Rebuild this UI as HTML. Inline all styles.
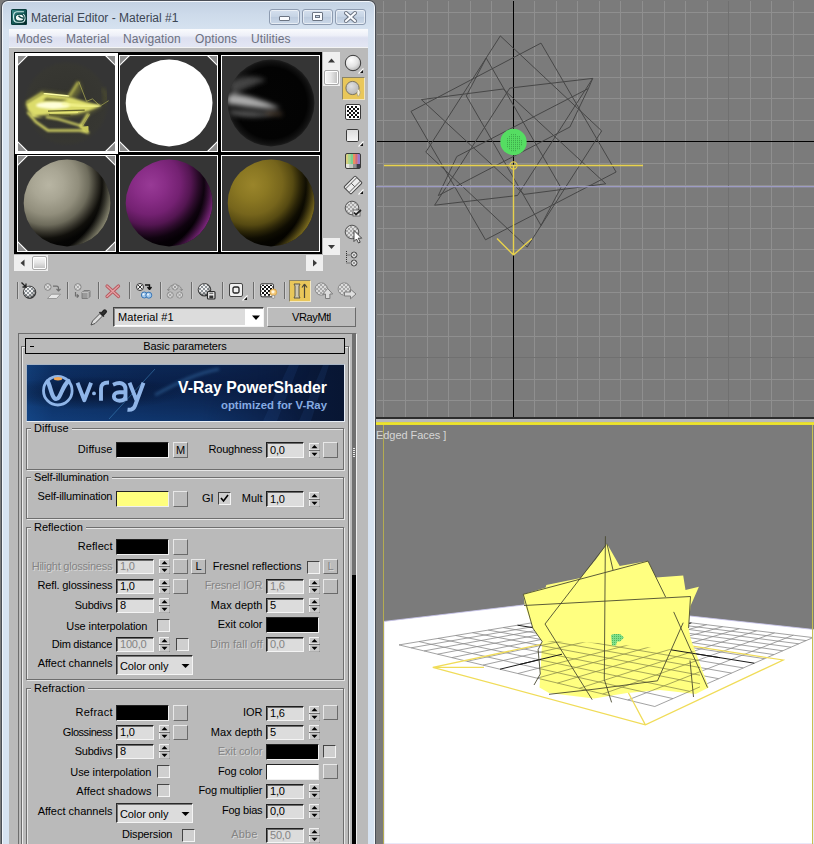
<!DOCTYPE html><html><head><meta charset="utf-8"><title>Material Editor</title><style>
*{box-sizing:border-box;margin:0;padding:0}
html,body{width:814px;height:844px;overflow:hidden;background:#7b7b7b}
body{position:relative;font-family:"Liberation Sans",sans-serif;font-size:11px;color:#000}
.a{position:absolute}
.t{position:absolute;white-space:nowrap;line-height:13px;height:13px;letter-spacing:-0.25px}
.r{text-align:right}
.dis{color:#848484;text-shadow:1px 1px 0 #d8d8d8}
.fld{position:absolute;height:15px;background:#dcdcdc;border:1px solid;border-color:#1e1e1e #f4f4f4 #f4f4f4 #1e1e1e;box-shadow:inset 1px 1px 0 #6a6a6a;font-size:11px;line-height:14px;padding-left:3px;letter-spacing:-0.2px;white-space:nowrap;overflow:hidden}
.fld.dis{color:#848484;text-shadow:1px 1px 0 #d8d8d8}
.sw{position:absolute;border:1px solid;border-color:#222 #f0f0f0 #f0f0f0 #222}
.mb{position:absolute;width:15px;height:15px;background:#bcbcbc;border:1px solid;border-color:#e8e8e8 #6a6a6a #6a6a6a #e8e8e8;font-size:11px;line-height:12px;text-align:center}
.cb{position:absolute;width:13px;height:13px;background:#cfcfcf;border:1px solid;border-color:#444 #f4f4f4 #f4f4f4 #444}
.grp{position:absolute;border:1px solid #6e6e6e;box-shadow:1px 1px 0 #e6e6e6, inset 1px 1px 0 #e6e6e6}
.gl{position:absolute;background:#bababa;padding:0 3px 0 3px;line-height:13px;height:13px;white-space:nowrap}
.sp{position:absolute;width:11px;height:15px}
.dd{position:absolute;height:20px;background:#dcdcdc;border:1px solid;border-color:#2a2a2a #f4f4f4 #f4f4f4 #2a2a2a;box-shadow:inset 1px 1px 0 #777;line-height:20px;padding-left:3px;white-space:nowrap}
</style></head><body><svg class="a" style="left:376px;top:0" width="438" height="419" viewBox="376 0 438 419" shape-rendering="crispEdges"><rect x="376" y="0" width="438" height="419" fill="#7b7b7b"/><path d="M383 0V417M376 12H814M405 0V417M376 34H814M427 0V417M376 55H814M448 0V417M376 77H814M470 0V417M376 98H814M491 0V417M376 120H814M534 0V417M376 163H814M556 0V417M376 185H814M577 0V417M376 206H814M599 0V417M376 228H814M620 0V417M376 249H814M642 0V417M376 271H814M664 0V417M376 292H814M685 0V417M376 314H814M707 0V417M376 336H814M750 0V417M376 379H814M771 0V417M376 400H814M793 0V417" stroke="#8f8f8f" stroke-width="1" fill="none" transform="translate(0.5,0.5)"/><path d="M728 0V417M376 357H814" stroke="#707070" stroke-width="1" fill="none" transform="translate(0.5,0.5)"/><path d="M513 0V417M376 141H814" stroke="#000" stroke-width="1" fill="none" transform="translate(0.5,0.5)"/></svg><svg class="a" style="left:376px;top:0" width="438" height="419" viewBox="376 0 438 419"><path d="M500.3 35.9L601.7 130.9L527.2 247.1L425.8 152.1ZM411.0 111.4L541.0 43.1L616.1 172.0L485.5 239.8ZM588.4 88.5L456.8 156.5L438.3 195.6L569.9 127.0ZM421.4 99.6L503.2 89.0L605.8 183.8L524.0 194.4ZM509.8 88.1L592.7 78.4L517.5 195.5L434.6 205.2ZM486.2 58.0L466.3 95.9L541.0 225.5L560.9 187.6ZM588.4 88.5L592.7 78.4" stroke="#474747" stroke-width="1" fill="none"/><rect x="376" y="186" width="438" height="1.3" fill="#9d9bc4"/><path d="M384 165.5H643M513.5 165V255M513.5 255L497 238.5M513.5 255L532 238.5" stroke="#e8d24c" stroke-width="1.4" fill="none"/><circle cx="513.5" cy="165.5" r="3.6" stroke="#e6cf4a" stroke-width="1.1" fill="none"/><circle cx="513.5" cy="142" r="13.2" fill="#55dd62"/><rect x="511" y="134" width="1" height="1.2" fill="#3fae4c"/><rect x="513" y="134" width="1" height="1.2" fill="#3fae4c"/><rect x="515" y="134" width="1" height="1.2" fill="#3fae4c"/><rect x="509" y="136" width="1" height="1.2" fill="#3fae4c"/><rect x="511" y="136" width="1" height="1.2" fill="#3fae4c"/><rect x="513" y="136" width="1" height="1.2" fill="#3fae4c"/><rect x="515" y="136" width="1" height="1.2" fill="#3fae4c"/><rect x="517" y="136" width="1" height="1.2" fill="#3fae4c"/><rect x="519" y="136" width="1" height="1.2" fill="#3fae4c"/><rect x="507" y="138" width="1" height="1.2" fill="#3fae4c"/><rect x="509" y="138" width="1" height="1.2" fill="#3fae4c"/><rect x="511" y="138" width="1" height="1.2" fill="#3fae4c"/><rect x="513" y="138" width="1" height="1.2" fill="#3fae4c"/><rect x="515" y="138" width="1" height="1.2" fill="#3fae4c"/><rect x="517" y="138" width="1" height="1.2" fill="#3fae4c"/><rect x="519" y="138" width="1" height="1.2" fill="#3fae4c"/><rect x="507" y="140" width="1" height="1.2" fill="#3fae4c"/><rect x="509" y="140" width="1" height="1.2" fill="#3fae4c"/><rect x="511" y="140" width="1" height="1.2" fill="#3fae4c"/><rect x="513" y="140" width="1" height="1.2" fill="#3fae4c"/><rect x="515" y="140" width="1" height="1.2" fill="#3fae4c"/><rect x="517" y="140" width="1" height="1.2" fill="#3fae4c"/><rect x="519" y="140" width="1" height="1.2" fill="#3fae4c"/><rect x="521" y="140" width="1" height="1.2" fill="#3fae4c"/><rect x="507" y="142" width="1" height="1.2" fill="#3fae4c"/><rect x="509" y="142" width="1" height="1.2" fill="#3fae4c"/><rect x="511" y="142" width="1" height="1.2" fill="#3fae4c"/><rect x="513" y="142" width="1" height="1.2" fill="#3fae4c"/><rect x="515" y="142" width="1" height="1.2" fill="#3fae4c"/><rect x="517" y="142" width="1" height="1.2" fill="#3fae4c"/><rect x="519" y="142" width="1" height="1.2" fill="#3fae4c"/><rect x="521" y="142" width="1" height="1.2" fill="#3fae4c"/><rect x="507" y="144" width="1" height="1.2" fill="#3fae4c"/><rect x="509" y="144" width="1" height="1.2" fill="#3fae4c"/><rect x="511" y="144" width="1" height="1.2" fill="#3fae4c"/><rect x="513" y="144" width="1" height="1.2" fill="#3fae4c"/><rect x="515" y="144" width="1" height="1.2" fill="#3fae4c"/><rect x="517" y="144" width="1" height="1.2" fill="#3fae4c"/><rect x="519" y="144" width="1" height="1.2" fill="#3fae4c"/><rect x="521" y="144" width="1" height="1.2" fill="#3fae4c"/><rect x="507" y="146" width="1" height="1.2" fill="#3fae4c"/><rect x="509" y="146" width="1" height="1.2" fill="#3fae4c"/><rect x="511" y="146" width="1" height="1.2" fill="#3fae4c"/><rect x="513" y="146" width="1" height="1.2" fill="#3fae4c"/><rect x="515" y="146" width="1" height="1.2" fill="#3fae4c"/><rect x="517" y="146" width="1" height="1.2" fill="#3fae4c"/><rect x="519" y="146" width="1" height="1.2" fill="#3fae4c"/><rect x="509" y="148" width="1" height="1.2" fill="#3fae4c"/><rect x="511" y="148" width="1" height="1.2" fill="#3fae4c"/><rect x="513" y="148" width="1" height="1.2" fill="#3fae4c"/><rect x="515" y="148" width="1" height="1.2" fill="#3fae4c"/><rect x="517" y="148" width="1" height="1.2" fill="#3fae4c"/><rect x="519" y="148" width="1" height="1.2" fill="#3fae4c"/><rect x="511" y="150" width="1" height="1.2" fill="#3fae4c"/><rect x="513" y="150" width="1" height="1.2" fill="#3fae4c"/><rect x="515" y="150" width="1" height="1.2" fill="#3fae4c"/></svg><div class="a" style="left:376px;top:417px;width:438px;height:2px;background:#2c2c2c"></div><div class="a" style="left:376px;top:419px;width:438px;height:3px;background:#b9b9b9"></div><div class="a" style="left:376px;top:422px;width:438px;height:3px;background:linear-gradient(#d8d040,#efe62c 40%,#e6dc30)"></div><svg class="a" style="left:376px;top:425px" width="438" height="419" viewBox="376 425 438 419"><rect x="376" y="425" width="438" height="419" fill="#7b7b7b"/><polygon points="384,621.4 555,601.3 814,629.5 814,844 384,844" fill="#ffffff" stroke="#c8c4ee" stroke-width="0.8"/><path d="M399.0 644.9L654.8 706.5M399.0 644.9L599.0 611.7M419.1 641.6L673.0 698.6M411.2 647.8L610.8 613.1M438.0 638.4L689.6 691.3M424.1 650.9L623.1 614.6M455.8 635.5L704.8 684.7M437.6 654.2L635.8 616.1M472.5 632.7L718.7 678.7M451.9 657.6L648.9 617.7M488.3 630.1L731.5 673.1M467.0 661.3L662.6 619.4M503.3 627.6L743.3 667.9M483.0 665.1L676.7 621.1M530.9 623.0L764.5 658.7M518.0 673.5L706.7 624.7M543.7 620.9L773.9 654.6M537.1 678.2L722.7 626.7M555.8 618.9L782.8 650.8M557.5 683.1L739.2 628.7M567.4 616.9L791.1 647.2M579.4 688.3L756.5 630.8M578.4 615.1L798.8 643.8M602.7 694.0L774.5 632.9M588.9 613.4L806.1 640.6M627.8 700.0L793.3 635.2M599.0 611.7L813.0 637.6M654.8 706.5L813.0 637.6" stroke="#8a8a8a" stroke-width="0.8" fill="none"/><path d="M517.5 625.2L754.3 663.2M500.0 669.2L691.4 622.9" stroke="#1a1a1a" stroke-width="1" fill="none"/><path d="M432.8 667.3L645.4 724.9L783.2 660L600 632ZM645.4 724.9L626.4 689M432.8 667.3L484 667.3" stroke="#f0dc58" stroke-width="1.25" fill="none"/><polygon points="523.3,594.3 545.7,587.6 546.3,584.9 580.6,578.1 596.0,559.2 607.0,543.8 619.7,566.0 648.0,561.1 656.0,577.5 683.2,575.4 685.5,590.0 698.9,586.8 690.5,606.0 688.6,628.0 690.6,638.5 708.7,687.5 695.8,694.0 660.0,690.0 627.0,693.0 594.0,698.4 549.0,693.0 539.5,687.6 540.3,674.0 542.2,641.6 532.8,628.1 524.6,603.8" fill="#ffff80"/><clipPath id="oc"><polygon points="523.3,594.3 545.7,587.6 546.3,584.9 580.6,578.1 596.0,559.2 607.0,543.8 619.7,566.0 648.0,561.1 656.0,577.5 683.2,575.4 685.5,590.0 698.9,586.8 690.5,606.0 688.6,628.0 690.6,638.5 708.7,687.5 695.8,694.0 660.0,690.0 627.0,693.0 594.0,698.4 549.0,693.0 539.5,687.6 540.3,674.0 542.2,641.6 532.8,628.1 524.6,603.8"/></clipPath><clipPath id="oc2"><polygon points="520,640 600,643 700,652 700,700 520,700"/></clipPath><g clip-path="url(#oc2)"><path d="M399.0 644.9L654.8 706.5M399.0 644.9L599.0 611.7M419.1 641.6L673.0 698.6M411.2 647.8L610.8 613.1M438.0 638.4L689.6 691.3M424.1 650.9L623.1 614.6M455.8 635.5L704.8 684.7M437.6 654.2L635.8 616.1M472.5 632.7L718.7 678.7M451.9 657.6L648.9 617.7M488.3 630.1L731.5 673.1M467.0 661.3L662.6 619.4M503.3 627.6L743.3 667.9M483.0 665.1L676.7 621.1M530.9 623.0L764.5 658.7M518.0 673.5L706.7 624.7M543.7 620.9L773.9 654.6M537.1 678.2L722.7 626.7M555.8 618.9L782.8 650.8M557.5 683.1L739.2 628.7M567.4 616.9L791.1 647.2M579.4 688.3L756.5 630.8M578.4 615.1L798.8 643.8M602.7 694.0L774.5 632.9M588.9 613.4L806.1 640.6M627.8 700.0L793.3 635.2M599.0 611.7L813.0 637.6M654.8 706.5L813.0 637.6" stroke="#90904c" stroke-width="0.8" fill="none" clip-path="url(#oc)"/></g><clipPath id="oc3"><polygon points="520,640 562,640 562,700 520,700"/><polygon points="671,640 720,640 720,700 671,700"/></clipPath><g clip-path="url(#oc3)"><path d="M517.5 625.2L754.3 663.2M500.0 669.2L691.4 622.9" stroke="#1a1a1a" stroke-width="1" fill="none"/></g><path d="M605.4 536.2L604.3 679.5L611.6 702.4M607 543.8L613 570M523.3 594.3L648 561.1L665.6 597M524 605.5L690.5 596.5L688.6 628M606 545L545 624L592.2 699.7M523.3 594.3L532.8 628.1L542.2 641.6L538.1 649.7L540.3 674L534 685M549 694.3L596 689L657.5 680.8L683.2 622.7M673.7 611.9L707.5 687.6M690 660.5L693.5 697" stroke="#4a4a30" stroke-width="0.9" fill="none"/><pattern id="gz" width="2" height="2" patternUnits="userSpaceOnUse"><rect width="2" height="2" fill="#7fe08a"/><rect width="1" height="1" fill="#4fb85c"/></pattern><path d="M611 635l3-1h6l4 3.500l-4 4h-3l-1 4h-4z" fill="url(#gz)"/><rect x="383" y="425" width="1" height="419" fill="#b4ac52"/><rect x="812" y="425" width="1" height="419" fill="#c8c050"/></svg><div class="t" style="left:376px;top:429px;color:#d6d6d6;font-size:11px;letter-spacing:-0.05px">Edged Faces ]</div><div class="a" style="left:0;top:0;width:376px;height:844px;background:#7b7b7b"></div><div class="a" style="left:1px;top:0;width:375px;height:850px;border-radius:7px 7px 0 0;background:#4a4f57"></div><div class="a" style="left:2px;top:1px;width:373px;height:850px;border-radius:6px 6px 0 0;background:#f2f6fb"></div><div class="a" style="left:3px;top:2px;width:371px;height:850px;border-radius:5px 5px 0 0;background:linear-gradient(#c3d2e3 0px,#cddaea 12px,#d6e2f0 28px,#d7e3f1 60px)"></div><div class="a" style="left:9px;top:29px;width:359px;height:815px;background:#bababa"></div><svg class="a" style="left:11px;top:9px" width="16" height="16" viewBox="0 0 16 16">
<defs><linearGradient id="ig" x1="0" y1="0" x2="1" y2="1"><stop offset="0" stop-color="#3c8f8c"/><stop offset=".5" stop-color="#145a58"/><stop offset="1" stop-color="#031c1c"/></linearGradient></defs>
<rect x="0" y="0" width="16" height="16" rx="1.500" fill="url(#ig)"/>
<rect x=".5" y=".5" width="15" height="15" rx="1.200" fill="none" stroke="#0a3c3c" stroke-width="1"/>
<path d="M12.500 2.800H6C3.500 2.800 2.500 4.500 2.500 8s1.200 5.300 3.800 5.300h4.500c2.200 0 3.200-1.600 3.200-4.200c0-1.500-.5-2.800-1.500-3.600" stroke="#d4eeec" stroke-width="1.100" fill="none" stroke-linecap="round"/>
<ellipse cx="8.700" cy="8.700" rx="4" ry="3.100" fill="#f0f8f6"/>
<path d="M7.500 6.800c1.500 1.800 3 2.500 5 2.500" stroke="#0c4644" stroke-width="1.400" fill="none"/>
<ellipse cx="8.700" cy="8.700" rx="4.300" ry="3.400" fill="none" stroke="#0c4442" stroke-width=".9"/>
</svg><div class="t" style="left:31px;top:10px;font-size:12px;line-height:16px;height:16px;letter-spacing:0;color:#3c4654">Material Editor - Material #1</div><div class="a" style="left:269px;top:9px;width:31px;height:16px;border:1px solid #8d9bb0;border-radius:3px;background:linear-gradient(#d5e0ee,#c5d3e4 50%,#bccbde 51%,#cbd8e8);box-shadow:inset 0 0 0 1px rgba(255,255,255,.55)"></div><div class="a" style="left:279px;top:16px;width:11px;height:5px;border:1px solid #6b7482;border-radius:1px;background:#fafcff"></div><div class="a" style="left:302px;top:9px;width:31px;height:16px;border:1px solid #8d9bb0;border-radius:3px;background:linear-gradient(#d5e0ee,#c5d3e4 50%,#bccbde 51%,#cbd8e8);box-shadow:inset 0 0 0 1px rgba(255,255,255,.55)"></div><div class="a" style="left:312px;top:12px;width:11px;height:9px;border:1px solid #6b7482;border-radius:1px;background:#fafcff"></div><div class="a" style="left:315px;top:15px;width:5px;height:3px;border:1px solid #6b7482;background:#c9d6e6"></div><div class="a" style="left:335px;top:9px;width:31px;height:16px;border:1px solid #8d9bb0;border-radius:3px;background:linear-gradient(#d5e0ee,#c5d3e4 50%,#bccbde 51%,#cbd8e8);box-shadow:inset 0 0 0 1px rgba(255,255,255,.55)"></div><svg class="a" style="left:344px;top:11px" width="13" height="12" viewBox="0 0 13 12"><path d="M2 2L11 10M11 2L2 10" stroke="#6b7482" stroke-width="4" stroke-linecap="square"/><path d="M2 2L11 10M11 2L2 10" stroke="#fafcff" stroke-width="2" stroke-linecap="square"/></svg><div class="a" style="left:9px;top:29px;width:359px;height:18px;background:linear-gradient(#fafbfd 0,#eef0f8 35%,#dde0f0 50%,#e3e6f3 100%)"></div><div class="a" style="left:9px;top:47px;width:359px;height:1px;background:#f4f4f4"></div><div class="t" style="left:16px;top:32px;font-size:12px;line-height:15px;height:15px;letter-spacing:0.1px;color:#6c7080">Modes</div><div class="t" style="left:66px;top:32px;font-size:12px;line-height:15px;height:15px;letter-spacing:0.1px;color:#6c7080">Material</div><div class="t" style="left:123px;top:32px;font-size:12px;line-height:15px;height:15px;letter-spacing:0.1px;color:#6c7080">Navigation</div><div class="t" style="left:195px;top:32px;font-size:12px;line-height:15px;height:15px;letter-spacing:0.1px;color:#6c7080">Options</div><div class="t" style="left:251px;top:32px;font-size:12px;line-height:15px;height:15px;letter-spacing:0.1px;color:#6c7080">Utilities</div><div class="a" style="left:14px;top:52px;width:308px;height:202px;background:#000"></div><div class="a" style="left:15px;top:53px;width:103px;height:101px;background:#fff"></div><div class="a" style="left:17px;top:55px;width:99px;height:97px;background:#fff"></div><svg class="a" style="left:18px;top:56px" width="97" height="95" viewBox="0 0 97 95"><rect width="97" height="95" fill="#353535"/><defs><radialGradient id="bg1" cx=".5" cy=".5" r=".5"><stop offset="0" stop-color="#33332e"/><stop offset=".9" stop-color="#373732"/><stop offset="1" stop-color="#353535"/></radialGradient>
<filter id="bl" x="-20%" y="-20%" width="140%" height="140%"><feGaussianBlur stdDeviation="0.9"/></filter>
<filter id="bl0" x="-20%" y="-20%" width="140%" height="140%"><feGaussianBlur stdDeviation="0.45"/></filter>
<filter id="bl2" x="-20%" y="-20%" width="140%" height="140%"><feGaussianBlur stdDeviation="2"/></filter></defs>
<circle cx="48.5" cy="47.5" r="43" fill="url(#bg1)"/>
<path d="M7 48L24 35L51 39L60.500 25L64 33L56 44L84 50L70 58L40 62L12 58Z" fill="#86863a" filter="url(#bl2)" opacity=".6"/>
<path d="M8 47.500L25 37.500L51 41L68 46L83 50L71 54.500L58 58L30 58.500L16 60L10 54Z" fill="#dcdc6a" filter="url(#bl)"/>
<path d="M28 41.500L50 43.500L43 46L25 45Z" fill="#6e6e34" filter="url(#bl)" opacity=".9"/>
<ellipse cx="35" cy="49.300" rx="17" ry="3.600" fill="#ffffd8" filter="url(#bl)"/>
<path d="M44 48L70 50.500L82 50" stroke="#fafa96" stroke-width="1.800" fill="none" filter="url(#bl)"/>
<path d="M25.600 37.500L51.300 40" stroke="#ffffa6" stroke-width="1.600" fill="none" filter="url(#bl0)"/>
<path d="M8.500 46.500L25 36.500" stroke="#b4b450" stroke-width="2.400" fill="none" filter="url(#bl)"/>
<path d="M51.300 40.500L60.500 26" stroke="#a4a44a" stroke-width="3.200" fill="none" filter="url(#bl)"/>
<path d="M30 55.200L66.700 54.200M31 58.800L52.400 59.400" stroke="#4c4c24" stroke-width="1.300" fill="none" opacity=".85" filter="url(#bl0)"/>
<path d="M32 57L60 56.500" stroke="#e8e878" stroke-width="1.100" fill="none" filter="url(#bl0)"/>
<path d="M9.500 56L18 66L30 74.500L62 74.500L70 76.500L62.500 70L70.500 57.500" stroke="#d4d462" stroke-width="2.600" fill="none" filter="url(#bl)" stroke-linejoin="round"/>
<path d="M28 61L40 63L64.400 70.300" stroke="#dcdc68" stroke-width="2.200" fill="none" filter="url(#bl)"/>
<path d="M11 50C13 56 17 60 26 62L14 61Z" fill="#dada6c" filter="url(#bl)"/>
<path d="M62 71L70 76V70Z" fill="#c8c85c" filter="url(#bl0)"/>
<path d="M60.800 25.600L68.500 45.300L74.500 42.900L82.200 50L90.600 44.700M64.400 70.300L71.500 58.400M70.300 70.300V76" stroke="#c0c058" stroke-width=".7" fill="none" opacity=".9"/>
<path d="M84 33C89 37 89 43 86 47" stroke="#58582f" stroke-width="3" fill="none" filter="url(#bl2)" opacity=".8"/>
<polygon points="0,0 9,0 0,9" fill="#8a8a8a"/><path d="M10 -1L-1 10" stroke="#fff" stroke-width="1.2"/><polygon points="97,0 88,0 97,9" fill="#8a8a8a"/><path d="M87 -1L98 10" stroke="#fff" stroke-width="1.2"/><polygon points="0,95 9,95 0,86" fill="#8a8a8a"/><path d="M10 96L-1 85" stroke="#fff" stroke-width="1.2"/><polygon points="97,95 88,95 97,86" fill="#8a8a8a"/><path d="M87 96L98 85" stroke="#fff" stroke-width="1.2"/></svg><div class="a" style="left:119px;top:55px;width:99px;height:97px;background:#fff"></div><svg class="a" style="left:120px;top:56px" width="97" height="95" viewBox="0 0 97 95"><rect width="97" height="95" fill="#353535"/><circle cx="49.100" cy="47" r="43.400" fill="#fff"/><polygon points="0,0 9,0 0,9" fill="#8a8a8a"/><path d="M10 -1L-1 10" stroke="#fff" stroke-width="1.2"/><polygon points="97,0 88,0 97,9" fill="#8a8a8a"/><path d="M87 -1L98 10" stroke="#fff" stroke-width="1.2"/><polygon points="0,95 9,95 0,86" fill="#8a8a8a"/><path d="M10 96L-1 85" stroke="#fff" stroke-width="1.2"/><polygon points="97,95 88,95 97,86" fill="#8a8a8a"/><path d="M87 96L98 85" stroke="#fff" stroke-width="1.2"/></svg><div class="a" style="left:221px;top:55px;width:99px;height:97px;background:#fff"></div><svg class="a" style="left:222px;top:56px" width="97" height="95" viewBox="0 0 97 95"><rect width="97" height="95" fill="#353535"/><defs><radialGradient id="s3" cx=".5" cy=".5" r=".5"><stop offset="0" stop-color="#040404"/><stop offset=".82" stop-color="#030303"/><stop offset=".95" stop-color="#121212"/><stop offset="1" stop-color="#1e1e1e"/></radialGradient>
<filter id="b3" x="-30%" y="-30%" width="160%" height="160%"><feGaussianBlur stdDeviation="2.4"/></filter><clipPath id="c3"><circle cx="49.100" cy="47" r="43.400"/></clipPath></defs>
<circle cx="49.100" cy="47" r="43.400" fill="url(#s3)"/>
<g clip-path="url(#c3)" filter="url(#b3)"><path d="M8 28C16 20 30 18 44 24C36 28 22 32 10 40Z" fill="#5a5a5a" opacity=".75"/><path d="M5 40C14 36 28 40 44 46L58 52C44 54 22 50 6 48Z" fill="#b4b4b4" opacity=".95"/><path d="M8 54C20 54 36 56 56 58C40 62 20 62 9 58Z" fill="#707070" opacity=".8"/><path d="M44 57L60 58" stroke="#a08060" stroke-width="3" opacity=".5"/></g></svg><div class="a" style="left:17px;top:155px;width:99px;height:97px;background:#fff"></div><svg class="a" style="left:18px;top:156px" width="97" height="95" viewBox="0 0 97 95"><rect width="97" height="95" fill="#353535"/><defs><radialGradient id="s4" gradientUnits="userSpaceOnUse" cx="27" cy="25" r="78" fx="31" fy="29"><stop offset="0" stop-color="#b8b5a3"/><stop offset=".2" stop-color="#a9a694"/><stop offset=".40" stop-color="#918e7c"/><stop offset=".54" stop-color="#6e6c5c"/><stop offset=".64" stop-color="#38362d"/><stop offset=".72" stop-color="#100f0b"/><stop offset=".80" stop-color="#050504"/><stop offset="1" stop-color="#030302"/></radialGradient><radialGradient id="s4r" gradientUnits="userSpaceOnUse" cx="14" cy="30" r="82.400"><stop offset="0.85" stop-color="#9a9880" stop-opacity="0"/><stop offset="0.94" stop-color="#9a9880" stop-opacity="0.55"/><stop offset="1" stop-color="#9a9880" stop-opacity="0.9"/></radialGradient></defs><circle cx="49.100" cy="47" r="43.400" fill="url(#s4)"/><circle cx="49.100" cy="47" r="43.400" fill="url(#s4r)"/><polygon points="0,0 9,0 0,9" fill="#8a8a8a"/><path d="M10 -1L-1 10" stroke="#fff" stroke-width="1.2"/><polygon points="97,0 88,0 97,9" fill="#8a8a8a"/><path d="M87 -1L98 10" stroke="#fff" stroke-width="1.2"/><polygon points="0,95 9,95 0,86" fill="#8a8a8a"/><path d="M10 96L-1 85" stroke="#fff" stroke-width="1.2"/><polygon points="97,95 88,95 97,86" fill="#8a8a8a"/><path d="M87 96L98 85" stroke="#fff" stroke-width="1.2"/></svg><div class="a" style="left:119px;top:155px;width:99px;height:97px;background:#fff"></div><svg class="a" style="left:120px;top:156px" width="97" height="95" viewBox="0 0 97 95"><rect width="97" height="95" fill="#353535"/><defs><radialGradient id="s5" gradientUnits="userSpaceOnUse" cx="27" cy="25" r="78" fx="31" fy="29"><stop offset="0" stop-color="#983a96"/><stop offset=".2" stop-color="#892d87"/><stop offset=".40" stop-color="#742172"/><stop offset=".54" stop-color="#541652"/><stop offset=".64" stop-color="#2b0b2a"/><stop offset=".72" stop-color="#0f030f"/><stop offset=".80" stop-color="#050005"/><stop offset="1" stop-color="#030003"/></radialGradient><radialGradient id="s5r" gradientUnits="userSpaceOnUse" cx="14" cy="30" r="82.400"><stop offset="0.85" stop-color="#8e2c8e" stop-opacity="0"/><stop offset="0.94" stop-color="#8e2c8e" stop-opacity="0.55"/><stop offset="1" stop-color="#8e2c8e" stop-opacity="0.9"/></radialGradient></defs><circle cx="49.100" cy="47" r="43.400" fill="url(#s5)"/><circle cx="49.100" cy="47" r="43.400" fill="url(#s5r)"/></svg><div class="a" style="left:221px;top:155px;width:99px;height:97px;background:#fff"></div><svg class="a" style="left:222px;top:156px" width="97" height="95" viewBox="0 0 97 95"><rect width="97" height="95" fill="#353535"/><defs><radialGradient id="s6" gradientUnits="userSpaceOnUse" cx="27" cy="25" r="78" fx="31" fy="29"><stop offset="0" stop-color="#9a852b"/><stop offset=".2" stop-color="#8b7823"/><stop offset=".40" stop-color="#76651c"/><stop offset=".54" stop-color="#564a12"/><stop offset=".64" stop-color="#2b2508"/><stop offset=".72" stop-color="#0f0d02"/><stop offset=".80" stop-color="#050400"/><stop offset="1" stop-color="#030200"/></radialGradient><radialGradient id="s6r" gradientUnits="userSpaceOnUse" cx="14" cy="30" r="82.400"><stop offset="0.85" stop-color="#8e7c24" stop-opacity="0"/><stop offset="0.94" stop-color="#8e7c24" stop-opacity="0.55"/><stop offset="1" stop-color="#8e7c24" stop-opacity="0.9"/></radialGradient></defs><circle cx="49.100" cy="47" r="43.400" fill="url(#s6)"/><circle cx="49.100" cy="47" r="43.400" fill="url(#s6r)"/></svg><div class="a" style="left:323px;top:52px;width:17px;height:34px;background:#efefef"></div><div class="a" style="left:324px;top:70px;width:15px;height:15px;border:1px solid #a8a8a8;border-radius:2px;box-shadow:inset 0 0 0 1px #fff;background:linear-gradient(90deg,#f8f8f8,#e6e6e6 45%,#bebebe)"></div><svg class="a" style="left:323px;top:52px" width="17" height="17"><polygon points="5,10.500 8.500,6.500 12,10.500" fill="#3a3a3a"/></svg><div class="a" style="left:323px;top:238px;width:17px;height:17px;background:#efefef"></div><svg class="a" style="left:323px;top:238px" width="17" height="17"><polygon points="5,7 12,7 8.500,11" fill="#3a3a3a"/></svg><div class="a" style="left:14px;top:255px;width:34px;height:16px;background:#efefef"></div><div class="a" style="left:32px;top:256px;width:15px;height:14px;border:1px solid #a8a8a8;border-radius:2px;box-shadow:inset 0 0 0 1px #fff;background:linear-gradient(#f8f8f8,#e6e6e6 45%,#bebebe)"></div><svg class="a" style="left:14px;top:255px" width="17" height="16"><polygon points="10.500,4.500 6.500,8 10.500,11.500" fill="#3a3a3a"/></svg><div class="a" style="left:306px;top:255px;width:17px;height:16px;background:#efefef"></div><svg class="a" style="left:306px;top:255px" width="17" height="16"><polygon points="7,4.500 11,8 7,11.500" fill="#3a3a3a"/></svg><svg class="a" style="left:0px;top:0px" width="1" height="1" viewBox="0 0 1 1"><defs><radialGradient id="sg" cx=".38" cy=".32" r=".7"><stop offset="0" stop-color="#ffffff"/><stop offset=".6" stop-color="#e4e4e4"/><stop offset="1" stop-color="#b8b8b8"/></radialGradient><radialGradient id="sg2" cx=".4" cy=".35" r=".7"><stop offset="0" stop-color="#e0e0e0"/><stop offset="1" stop-color="#b4b4b4"/></radialGradient><pattern id="chk" width="4" height="4" patternUnits="userSpaceOnUse"><rect width="4" height="4" fill="#fff"/><rect width="2" height="2" fill="#111"/><rect x="2" y="2" width="2" height="2" fill="#111"/></pattern><pattern id="chk2" width="4" height="4" patternUnits="userSpaceOnUse"><rect width="4" height="4" fill="#f0f0f0"/><rect width="2" height="2" fill="#8e9499"/><rect x="2" y="2" width="2" height="2" fill="#8e9499"/></pattern><pattern id="chk3" width="4" height="4" patternUnits="userSpaceOnUse"><rect width="4" height="4" fill="#dcdcdc"/><rect width="2" height="2" fill="#a8a8a8"/><rect x="2" y="2" width="2" height="2" fill="#a8a8a8"/></pattern></defs></svg><svg class="a" style="left:343px;top:52px" width="24" height="24" viewBox="0 0 24 24"><circle cx="10" cy="11" r="7.700" fill="url(#sg)" stroke="#3a3a3a" stroke-width="1"/><polygon points="20.0,21.0 16.5,21.0 20.0,17.5" fill="#111"/><path d="M15.5 21.5L20.5 16.5" stroke="#fff" stroke-width="1.1"/></svg><div class="a" style="left:342px;top:77px;width:23px;height:23px;background:#e9c75a;border:1px solid;border-color:#8a8468 #efe4c0 #efe4c0 #8a8468"></div><svg class="a" style="left:343px;top:77px" width="22" height="23" viewBox="0 0 22 23"><circle cx="9.500" cy="11" r="6.600" fill="url(#sg2)" stroke="#7a7460" stroke-width="1"/><path d="M15 12c2 1 2.500 3 1.800 5l-.8 2h-1.500l-.3-2.500" fill="#f6f2e0" stroke="#b0a680" stroke-width=".8"/></svg><svg class="a" style="left:345px;top:104px" width="17" height="17" viewBox="0 0 17 17"><rect x=".5" y=".5" width="15" height="15" rx="1.500" fill="#fff" stroke="#3a3a3a"/><rect x="2" y="2" width="12" height="12" fill="url(#chk)"/></svg><svg class="a" style="left:345px;top:128px" width="22" height="20" viewBox="0 0 22 20"><defs><linearGradient id="uv" x1="0" y1="0" x2="0" y2="1"><stop offset="0" stop-color="#dcdcdc"/><stop offset="1" stop-color="#f6f6f6"/></linearGradient></defs><rect x="1.500" y="1.500" width="12" height="12" rx="1.200" fill="url(#uv)" stroke="#3a3a3a"/><polygon points="18.0,18.0 14.5,18.0 18.0,14.5" fill="#111"/><path d="M13.5 18.5L18.5 13.5" stroke="#fff" stroke-width="1.1"/></svg><svg class="a" style="left:345px;top:153px" width="17" height="17" viewBox="0 0 17 17"><rect x="1.0" y="1" width="2.400" height="10" fill="#d8d080"/><rect x="3.3" y="1" width="2.400" height="10" fill="#a8d888"/><rect x="5.7" y="1" width="2.400" height="10" fill="#78d090"/><rect x="8.0" y="1" width="2.400" height="10" fill="#e89060"/><rect x="10.3" y="1" width="2.400" height="10" fill="#d86878"/><rect x="12.7" y="1" width="2.400" height="10" fill="#9878d0"/><rect x="1.0" y="11" width="3.500" height="4" fill="#e8e8e0"/><rect x="4.5" y="11" width="3.500" height="4" fill="#c0c8c0"/><rect x="8.0" y="11" width="3.500" height="4" fill="#909090"/><rect x="11.5" y="11" width="3.500" height="4" fill="#3a3c48"/><rect x=".5" y=".5" width="15" height="15" rx="1.500" fill="none" stroke="#3a3a3a"/></svg><svg class="a" style="left:343px;top:175px" width="24" height="24" viewBox="0 0 24 24"><g transform="rotate(-45 10 10)"><rect x="2" y="5" width="16" height="10" rx="1" fill="#ececec" stroke="#444" stroke-width="1"/><path d="M2 7.500H18M2 12.500H18M10 7.500V12.500" stroke="#555" stroke-width=".9"/></g><polygon points="20.0,19.0 16.5,19.0 20.0,15.5" fill="#111"/><path d="M15.5 19.5L20.5 14.5" stroke="#fff" stroke-width="1.1"/></svg><svg class="a" style="left:344px;top:200px" width="22" height="20" viewBox="0 0 22 20"><circle cx="8" cy="8" r="6.800" fill="url(#chk3)" stroke="#555" stroke-width="1"/><rect x="9" y="10" width="7" height="6" fill="#e8e8e8" stroke="#555" stroke-width=".8"/><path d="M10 12.500l2 2l5-4.500" stroke="#222" stroke-width="1.700" fill="none"/></svg><svg class="a" style="left:344px;top:224px" width="22" height="22" viewBox="0 0 22 22"><circle cx="8" cy="8" r="6.800" fill="url(#chk3)" stroke="#555" stroke-width="1"/><path d="M10 6.500v11l2.500-2.500l2 4l1.700-.8l-2-4h3.500z" fill="#fff" stroke="#333" stroke-width=".9"/></svg><svg class="a" style="left:344px;top:250px" width="22" height="20" viewBox="0 0 22 20"><path d="M2.500 1v12M2.500 5h3M2.500 13h3" stroke="#333" stroke-width="1" stroke-dasharray="1 1"/><circle cx="10" cy="5" r="3" fill="#e0e0e0" stroke="#444" stroke-width=".9"/><circle cx="10" cy="13" r="3" fill="#e0e0e0" stroke="#444" stroke-width=".9"/><path d="M8 3l4 4M12 3l-4 4M8 11l4 4M12 11l-4 4" stroke="#666" stroke-width=".6"/></svg><div class="a" style="left:17px;top:282px;width:1px;height:17px;background:#6c6c6c"></div><div class="a" style="left:18px;top:282px;width:1px;height:17px;background:#cdcdcd"></div><div class="a" style="left:67px;top:282px;width:1px;height:17px;background:#6c6c6c"></div><div class="a" style="left:68px;top:282px;width:1px;height:17px;background:#cdcdcd"></div><div class="a" style="left:98px;top:282px;width:1px;height:17px;background:#6c6c6c"></div><div class="a" style="left:99px;top:282px;width:1px;height:17px;background:#cdcdcd"></div><div class="a" style="left:129px;top:282px;width:1px;height:17px;background:#6c6c6c"></div><div class="a" style="left:130px;top:282px;width:1px;height:17px;background:#cdcdcd"></div><div class="a" style="left:160px;top:282px;width:1px;height:17px;background:#6c6c6c"></div><div class="a" style="left:161px;top:282px;width:1px;height:17px;background:#cdcdcd"></div><div class="a" style="left:191px;top:282px;width:1px;height:17px;background:#6c6c6c"></div><div class="a" style="left:192px;top:282px;width:1px;height:17px;background:#cdcdcd"></div><div class="a" style="left:222px;top:282px;width:1px;height:17px;background:#6c6c6c"></div><div class="a" style="left:223px;top:282px;width:1px;height:17px;background:#cdcdcd"></div><div class="a" style="left:253px;top:282px;width:1px;height:17px;background:#6c6c6c"></div><div class="a" style="left:254px;top:282px;width:1px;height:17px;background:#cdcdcd"></div><div class="a" style="left:284px;top:282px;width:1px;height:17px;background:#6c6c6c"></div><div class="a" style="left:285px;top:282px;width:1px;height:17px;background:#cdcdcd"></div><svg class="a" style="left:19px;top:280px" width="24" height="22" viewBox="0 0 24 22"><defs><radialGradient id="bsh" cx=".4" cy=".35" r=".65"><stop offset=".5" stop-color="#000" stop-opacity="0"/><stop offset="1" stop-color="#000" stop-opacity=".55"/></radialGradient></defs><circle cx="10.6" cy="12.3" r="6.2" fill="url(#chk2)" stroke="#3c3c3c" stroke-width=".9"/><circle cx="10.600" cy="12.300" r="6.200" fill="url(#bsh)"/><path d="M2.500 2.500l4.500 4.500M7 3.500V7H3.500" stroke="#222" stroke-width="1.300" fill="none"/></svg><svg class="a" style="left:43px;top:280px" width="24" height="22" viewBox="0 0 24 22"><circle cx="4.8" cy="7.0" r="3.3" fill="#e2e2e2" stroke="#7c7c7c" stroke-width=".9"/><path d="M3 5.200l3.600 3.600M6.600 5.200l-3.600 3.600" stroke="#8a8a8a" stroke-width=".8"/><path d="M10 6.200h3.500c1.500 0 2 .8 2 2v2M15.500 11l-2-2.200M15.500 11l2-2.200" stroke="#6e6e6e" stroke-width="1.200" fill="none"/><polygon points="4.500,18.500 8.500,14.200 17.500,14.200 13.500,18.500" fill="#e6e6e6" stroke="#8a8a8a" stroke-width=".8"/></svg><svg class="a" style="left:71px;top:280px" width="26" height="22" viewBox="0 0 26 22"><circle cx="6.8" cy="7.0" r="3.3" fill="#e2e2e2" stroke="#7c7c7c" stroke-width=".9"/><path d="M5 5.200l3.600 3.600M8.600 5.200l-3.600 3.600" stroke="#8a8a8a" stroke-width=".8"/><path d="M4.500 12v4h3M7.800 16l-2-1.600M7.800 16l-2 1.600" stroke="#6e6e6e" stroke-width="1.200" fill="none"/><path d="M11 12.500l2-2h6v6l-2 2h-6z" fill="#9a9a9a" stroke="#777" stroke-width=".9"/><path d="M11 12.500h6v6M17 12.500l2-2" fill="none" stroke="#c8c8c8" stroke-width=".8"/></svg><svg class="a" style="left:103px;top:282px" width="22" height="20" viewBox="0 0 22 20"><path d="M4 4L15.500 14.500M15.500 4L4 14.500" stroke="#b4585e" stroke-width="3.200" stroke-linecap="round"/><path d="M4 4L15.500 14.500M15.500 4L4 14.500" stroke="#e6a0a4" stroke-width="1.400" stroke-linecap="round"/></svg><svg class="a" style="left:133px;top:280px" width="26" height="22" viewBox="0 0 26 22"><circle cx="7.0" cy="7.0" r="3.5" fill="#f4f4f4" stroke="#222" stroke-width=".9"/><path d="M5 5l4 4M9 5l-4 4" stroke="#222" stroke-width=".9"/><path d="M12 5h4.500v3.500M16.500 9.500l-2-2.500M16.500 9.500l2-2.500" stroke="#111" stroke-width="1.400" fill="none"/><circle cx="11.3" cy="15.0" r="3.0" fill="#a4c8ea" stroke="#2e6eb2" stroke-width=".9"/><circle cx="15.8" cy="15.2" r="3.0" fill="#a4c8ea" stroke="#2e6eb2" stroke-width=".9"/><circle cx="10.500" cy="14.200" r="1" fill="#eef6ff"/><circle cx="15" cy="14.400" r="1" fill="#eef6ff"/></svg><svg class="a" style="left:164px;top:280px" width="26" height="22" viewBox="0 0 26 22"><circle cx="11.0" cy="7.0" r="3.1" fill="#d6d6d6" stroke="#8a8a8a" stroke-width=".9"/><circle cx="6.2" cy="15.0" r="3.1" fill="#d6d6d6" stroke="#8a8a8a" stroke-width=".9"/><circle cx="15.6" cy="15.0" r="3.1" fill="#d6d6d6" stroke="#8a8a8a" stroke-width=".9"/><path d="M9.200 5.200l3.600 3.600M12.800 5.200l-3.600 3.600M4.400 13.200l3.600 3.600M8 13.200l-3.600 3.600M13.800 13.200l3.600 3.600M17.400 13.200l-3.600 3.600" stroke="#8e8e8e" stroke-width=".8"/><path d="M4.500 10.500c0-3 1.500-4.500 3.500-5M17.500 10.500c0-3-1.500-4.500-3.500-5M4.500 10.800l-1.200-1.800M4.500 10.800l1.500-1.500M17.500 10.800l1.200-1.800M17.500 10.800l-1.500-1.500" stroke="#8a8a8a" stroke-width="1" fill="none"/></svg><svg class="a" style="left:195px;top:280px" width="26" height="22" viewBox="0 0 26 22"><circle cx="9.5" cy="9.8" r="6.3" fill="url(#chk2)" stroke="#3c3c3c" stroke-width=".9"/><circle cx="9.500" cy="9.800" r="6.300" fill="url(#bsh)"/><rect x="12.500" y="11.500" width="7.500" height="7.500" rx="1" fill="#f2f2f2" stroke="#2a2a2a" stroke-width="1.200"/><rect x="14.300" y="15.500" width="4" height="3" fill="#333"/><rect x="14.300" y="12.500" width="4" height="1.600" fill="#777"/></svg><svg class="a" style="left:226px;top:280px" width="26" height="22" viewBox="0 0 26 22"><rect x="3.500" y="3.500" width="13" height="13" rx="1.500" fill="#f0f0f0" stroke="#444" stroke-width="1"/><rect x="7" y="7" width="6" height="6" rx="1.500" fill="none" stroke="#222" stroke-width="1.300"/><polygon points="21.0,20.0 17.5,20.0 21.0,16.5" fill="#111"/><path d="M16.5 20.5L21.5 15.5" stroke="#fff" stroke-width="1.1"/></svg><svg class="a" style="left:258px;top:280px" width="26" height="22" viewBox="0 0 26 22"><rect x="2.500" y="3.800" width="13" height="13" rx="1.500" fill="#fff" stroke="#2e2e2e"/><rect x="3.500" y="4.800" width="11" height="11" fill="url(#chk)"/><circle cx="15.300" cy="12.300" r="3.400" fill="#f4c878" stroke="#d09838" stroke-width=".7"/><circle cx="15" cy="11.800" r="1.600" fill="#fff8e0"/><rect x="14" y="15.300" width="2.600" height="3" rx=".6" fill="#e8e8e8" stroke="#777" stroke-width=".6"/></svg><div class="a" style="left:289px;top:280px;width:22px;height:22px;background:#e9c75a;border:1px solid;border-color:#8a8468 #f3e8c4 #f3e8c4 #8a8468"></div><svg class="a" style="left:289px;top:280px" width="22" height="22" viewBox="0 0 22 22"><path d="M5 4h6l-1 2v10l1 2H5l1-2V6z" fill="#cfc8b0" stroke="#5a5648" stroke-width="1"/><path d="M15.500 18V5M15.500 4l-2.500 3.500M15.500 4l2.500 3.500" stroke="#4a4638" stroke-width="1.200" fill="none"/></svg><svg class="a" style="left:312px;top:280px" width="24" height="22" viewBox="0 0 24 22"><circle cx="9.3" cy="9.0" r="6.2" fill="url(#chk3)" stroke="#888" stroke-width=".9"/><path d="M13.500 18.500v-4.500h-2.800l5-5.500l5 5.500h-2.800v4.500z" fill="#dedede" stroke="#7c7c7c" stroke-width="1"/></svg><svg class="a" style="left:335px;top:280px" width="24" height="22" viewBox="0 0 24 22"><circle cx="9.3" cy="9.0" r="6.2" fill="url(#chk3)" stroke="#888" stroke-width=".9"/><path d="M9.500 12h6v-2.800l5.500 4.800l-5.500 4.800V16h-6z" fill="#dedede" stroke="#7c7c7c" stroke-width="1"/></svg><svg class="a" style="left:87px;top:305px" width="24" height="24" viewBox="0 0 24 24"><path d="M4 20l1.500-4L13 8.500l2.500 2.500L8 18.500z" fill="#dedede" stroke="#444" stroke-width=".9"/><path d="M12.500 7l4.500 4.500M14 8.500l3-3.200c1-1 3 1 2 2L16 10.500" stroke="#222" stroke-width="1.600" fill="#333"/></svg><div class="a" style="left:113px;top:307px;width:151px;height:20px;background:#fff;border:1px solid;border-color:#444 #f4f4f4 #f4f4f4 #444;box-shadow:inset 1px 1px 0 #8a8a8a"></div><div class="a" style="left:115px;top:309px;width:130px;height:16px;background:#dcdcdc"></div><div class="t" style="left:118px;top:311px;letter-spacing:0.12px">Material #1</div><svg class="a" style="left:251px;top:314px" width="10" height="7"><polygon points="1,1.500 9,1.500 5,6" fill="#000"/></svg><div class="a" style="left:267px;top:307px;width:89px;height:20px;background:#bcbcbc;border:1px solid;border-color:#ececec #6a6a6a #6a6a6a #ececec"></div><div class="t" style="left:267px;top:311px;width:89px;text-align:center;letter-spacing:-0.4px">VRayMtl</div><div class="a" style="left:18px;top:333px;width:339px;height:520px;border:1px solid;border-color:#6e6e6e #f0f0f0 #6e6e6e #6e6e6e"></div><div class="a" style="left:352px;top:334px;width:4px;height:241px;background:#707070"></div><div class="a" style="left:352px;top:575px;width:4px;height:270px;background:#000"></div><div class="a" style="left:353px;top:448px;width:2px;height:9px;background:repeating-linear-gradient(#e8e8e8 0 1px,#707070 1px 2px)"></div><div class="a" style="left:21px;top:346px;width:328px;height:510px;border:1px solid #6e6e6e;box-shadow:1px 1px 0 #ededed, inset 1px 1px 0 #ededed"></div><div class="a" style="left:25px;top:338px;width:320px;height:16px;background:#bababa;border:1px solid #000"></div><div class="a" style="left:30px;top:346px;width:4px;height:1px;background:#000"></div><div class="t" style="left:25px;top:340px;width:320px;text-align:center;letter-spacing:-0.14px">Basic parameters</div><svg class="a" style="left:27px;top:365px" width="317" height="56" viewBox="0 0 317 56">
<defs><linearGradient id="bn" x1="0" y1="0" x2="1" y2="0"><stop offset="0" stop-color="#113a72"/><stop offset=".08" stop-color="#0c2b5c"/><stop offset=".4" stop-color="#0a214b"/><stop offset=".75" stop-color="#0a1b40"/><stop offset="1" stop-color="#081633"/></linearGradient>
<linearGradient id="bnv" x1="0" y1="0" x2="0" y2="1"><stop offset="0" stop-color="#1a5aa8" stop-opacity=".12"/><stop offset=".35" stop-color="#1a5aa8" stop-opacity="0"/><stop offset="1" stop-color="#1a5aa8" stop-opacity=".36"/></linearGradient>
<linearGradient id="bnm" x1="0" y1="0" x2="1" y2="0"><stop offset="0" stop-color="#fff"/><stop offset=".55" stop-color="#fff"/><stop offset=".9" stop-color="#000"/></linearGradient>
<mask id="bnk"><rect width="317" height="56" fill="url(#bnm)"/></mask>
<radialGradient id="bn3" cx=".2" cy=".5" r=".3"><stop offset="0" stop-color="#040c22" stop-opacity=".7"/><stop offset="1" stop-color="#040c22" stop-opacity="0"/></radialGradient>
<filter id="bnb"><feGaussianBlur stdDeviation="1.5"/></filter></defs>
<rect width="317" height="56" fill="url(#bn)"/><rect width="317" height="56" fill="url(#bnv)" mask="url(#bnk)"/><rect width="317" height="56" fill="url(#bn3)"/>
<path d="M82 54L128 4" stroke="#4a98d0" stroke-width="1" opacity=".45"/>
<path d="M128 30C150 18 170 8 192 4" stroke="#4a90d0" stroke-width="3" opacity=".35" fill="none" filter="url(#bnb)"/>
<path d="M236 56L262 0h10L250 56zM272 56L296 0h6L284 56z" fill="#2a5a9c" opacity=".16"/>
<circle cx="30.800" cy="25.700" r="14.300" fill="none" stroke="#8fb5e8" stroke-width="2.800"/>
<path d="M20.500 16.500c2.500 2 4 17 8.500 17.500s6-13 12.500-18" fill="none" stroke="#8fb5e8" stroke-width="4.200" stroke-linecap="round"/>
<ellipse cx="31" cy="13.800" rx="4.200" ry="1.700" fill="#f0a858"/>
<g transform="translate(0,-4.300)" fill="none" stroke="#8fb5e8" stroke-width="3.900">
<path d="M50.500 22l6.800 17.500l6.800-17.500" stroke-linejoin="round"/>
<path d="M74 40V28c0-4.500 2.500-6.200 8-6.200"/>
<path d="M86 24c8-3.500 12.500-1 12.500 4.500v11.500M98.500 31.500h-6c-7.500 0-7.500 8.500 0 8.500c4 0 6-2 6-5"/>
<path d="M102.500 22l7 17.500M116.500 22l-8.500 23c-1.200 3.200-3.500 4.500-7.500 4"/>
</g>
<circle cx="67" cy="28.400" r="1.900" fill="#8fb5e8"/>
<text x="300" y="28" text-anchor="end" font-family="Liberation Sans, sans-serif" font-weight="bold" font-size="16.200" fill="#fff" textLength="149" lengthAdjust="spacingAndGlyphs">V-Ray PowerShader</text>
<text x="300" y="43.500" text-anchor="end" font-family="Liberation Sans, sans-serif" font-weight="bold" font-size="11.500" fill="#86abe2" textLength="106" lengthAdjust="spacingAndGlyphs">optimized for V-Ray</text>
</svg><div class="a" style="left:26px;top:364px;width:319px;height:58px;border:1px solid;border-color:#a8b4c4 #e8eef6 #e8eef6 #a8b4c4;pointer-events:none"></div><div class="grp" style="left:26px;top:428px;width:318px;height:42px"></div><div class="gl" style="left:31px;top:422px;letter-spacing:0.11px">Diffuse</div><div class="t r" style="left:-38px;width:150.6px;top:443px;letter-spacing:0.11px">Diffuse</div><div class="sw" style="left:116px;top:442px;width:53px;height:16px;background:#000"></div><div class="mb" style="left:173px;top:442px;height:16px;line-height:14px">M</div><div class="t r" style="left:112px;width:150.3px;top:443px;letter-spacing:-0.21px">Roughness</div><div class="fld" style="left:266px;top:442px;width:38px;height:16px;line-height:14px">0,0</div><svg class="sp" style="left:309px;top:443px" viewBox="0 0 11 15"><rect x=".5" y=".5" width="10" height="6.500" fill="#c8c8c8" stroke="#f0f0f0"/><rect x=".5" y="7.500" width="10" height="7" fill="#c8c8c8" stroke="#f0f0f0"/><path d="M0 7.500H11M11 0V15M0 15H11" stroke="#707070" stroke-width="1"/><polygon points="2.500,5.200 5.500,2 8.500,5.200" fill="#000"/><polygon points="2.500,9.800 5.500,13 8.500,9.800" fill="#000"/></svg><div class="mb" style="left:323px;top:442px;height:16px;line-height:14px"></div><div class="grp" style="left:26px;top:477px;width:318px;height:42px"></div><div class="gl" style="left:31px;top:471px;letter-spacing:-0.17px">Self-illumination</div><div class="t r" style="left:-38px;width:150.3px;top:490px;letter-spacing:-0.17px">Self-illumination</div><div class="sw" style="left:116px;top:491px;width:53px;height:16px;background:#ffff7e"></div><div class="mb" style="left:173px;top:491px;height:16px;line-height:14px"></div><div class="t r" style="left:63px;width:150.3px;top:492px;letter-spacing:-0.16px">GI</div><div class="cb" style="left:218px;top:492px"></div><svg class="a" style="left:218px;top:492px" width="13" height="13"><path d="M3 6l2.500 3l4.500-6" stroke="#000" stroke-width="1.600" fill="none"/></svg><div class="t r" style="left:112px;width:150.5px;top:492px;letter-spacing:0.00px">Mult</div><div class="fld" style="left:266px;top:491px;width:38px;height:16px;line-height:14px">1,0</div><svg class="sp" style="left:309px;top:492px" viewBox="0 0 11 15"><rect x=".5" y=".5" width="10" height="6.500" fill="#c8c8c8" stroke="#f0f0f0"/><rect x=".5" y="7.500" width="10" height="7" fill="#c8c8c8" stroke="#f0f0f0"/><path d="M0 7.500H11M11 0V15M0 15H11" stroke="#707070" stroke-width="1"/><polygon points="2.500,5.200 5.500,2 8.500,5.200" fill="#000"/><polygon points="2.500,9.800 5.500,13 8.500,9.800" fill="#000"/></svg><div class="grp" style="left:26px;top:527px;width:318px;height:153px"></div><div class="gl" style="left:31px;top:521px;letter-spacing:-0.01px">Reflection</div><div class="t r" style="left:-38px;width:150.6px;top:540px;letter-spacing:0.09px">Reflect</div><div class="sw" style="left:116px;top:539px;width:53px;height:16px;background:#000"></div><div class="mb" style="left:173px;top:539px;height:16px;line-height:14px"></div><div class="t r dis" style="left:-38px;width:150.2px;top:560px;letter-spacing:-0.25px">Hilight glossiness</div><div class="fld dis" style="left:116px;top:559px;width:38px;height:15px;line-height:13px">1,0</div><svg class="sp" style="left:159px;top:559px" viewBox="0 0 11 15"><rect x=".5" y=".5" width="10" height="6.500" fill="#c8c8c8" stroke="#f0f0f0"/><rect x=".5" y="7.500" width="10" height="7" fill="#c8c8c8" stroke="#f0f0f0"/><path d="M0 7.500H11M11 0V15M0 15H11" stroke="#707070" stroke-width="1"/><polygon points="2.500,5.200 5.500,2 8.500,5.200" fill="#000"/><polygon points="2.500,9.800 5.500,13 8.500,9.800" fill="#000"/></svg><div class="mb" style="left:173px;top:559px;height:15px;line-height:13px"></div><div class="mb" style="left:191px;top:559px;height:15px;line-height:13px">L</div><div class="t r" style="left:151px;width:150.4px;top:560px;letter-spacing:-0.06px">Fresnel reflections</div><div class="cb" style="left:307px;top:561px"></div><div class="mb dis" style="left:323px;top:559px;height:15px;line-height:13px">L</div><div class="t r" style="left:-38px;width:150.4px;top:579px;letter-spacing:-0.13px">Refl. glossiness</div><div class="fld" style="left:116px;top:579px;width:38px;height:15px;line-height:13px">1,0</div><svg class="sp" style="left:159px;top:579px" viewBox="0 0 11 15"><rect x=".5" y=".5" width="10" height="6.500" fill="#c8c8c8" stroke="#f0f0f0"/><rect x=".5" y="7.500" width="10" height="7" fill="#c8c8c8" stroke="#f0f0f0"/><path d="M0 7.500H11M11 0V15M0 15H11" stroke="#707070" stroke-width="1"/><polygon points="2.500,5.200 5.500,2 8.500,5.200" fill="#000"/><polygon points="2.500,9.800 5.500,13 8.500,9.800" fill="#000"/></svg><div class="mb" style="left:173px;top:579px;height:15px;line-height:13px"></div><div class="t r dis" style="left:112px;width:150.3px;top:579px;letter-spacing:-0.15px">Fresnel IOR</div><div class="fld dis" style="left:266px;top:579px;width:38px;height:15px;line-height:13px">1,6</div><svg class="sp" style="left:309px;top:579px" viewBox="0 0 11 15"><rect x=".5" y=".5" width="10" height="6.500" fill="#c8c8c8" stroke="#f0f0f0"/><rect x=".5" y="7.500" width="10" height="7" fill="#c8c8c8" stroke="#f0f0f0"/><path d="M0 7.500H11M11 0V15M0 15H11" stroke="#707070" stroke-width="1"/><polygon points="2.500,5.200 5.500,2 8.500,5.200" fill="#000"/><polygon points="2.500,9.800 5.500,13 8.500,9.800" fill="#000"/></svg><div class="mb" style="left:323px;top:579px;height:15px;line-height:13px"></div><div class="t r" style="left:-38px;width:150.3px;top:599px;letter-spacing:-0.21px">Subdivs</div><div class="fld" style="left:116px;top:598px;width:38px;height:15px;line-height:13px">8</div><svg class="sp" style="left:159px;top:598px" viewBox="0 0 11 15"><rect x=".5" y=".5" width="10" height="6.500" fill="#c8c8c8" stroke="#f0f0f0"/><rect x=".5" y="7.500" width="10" height="7" fill="#c8c8c8" stroke="#f0f0f0"/><path d="M0 7.500H11M11 0V15M0 15H11" stroke="#707070" stroke-width="1"/><polygon points="2.500,5.200 5.500,2 8.500,5.200" fill="#000"/><polygon points="2.500,9.800 5.500,13 8.500,9.800" fill="#000"/></svg><div class="t r" style="left:112px;width:150.5px;top:599px;letter-spacing:0.04px">Max depth</div><div class="fld" style="left:266px;top:598px;width:38px;height:15px;line-height:13px">5</div><svg class="sp" style="left:309px;top:598px" viewBox="0 0 11 15"><rect x=".5" y=".5" width="10" height="6.500" fill="#c8c8c8" stroke="#f0f0f0"/><rect x=".5" y="7.500" width="10" height="7" fill="#c8c8c8" stroke="#f0f0f0"/><path d="M0 7.500H11M11 0V15M0 15H11" stroke="#707070" stroke-width="1"/><polygon points="2.500,5.200 5.500,2 8.500,5.200" fill="#000"/><polygon points="2.500,9.800 5.500,13 8.500,9.800" fill="#000"/></svg><div class="t r" style="left:-3px;width:150.4px;top:620px;letter-spacing:-0.09px">Use interpolation</div><div class="cb" style="left:157px;top:619px"></div><div class="t r" style="left:112px;width:150.5px;top:618px;letter-spacing:-0.05px">Exit color</div><div class="sw" style="left:266px;top:617px;width:53px;height:16px;background:#000"></div><div class="t r" style="left:-38px;width:150.2px;top:638px;letter-spacing:-0.27px">Dim distance</div><div class="fld dis" style="left:116px;top:637px;width:38px;height:15px;line-height:13px">100,0</div><svg class="sp" style="left:159px;top:637px" viewBox="0 0 11 15"><rect x=".5" y=".5" width="10" height="6.500" fill="#c8c8c8" stroke="#f0f0f0"/><rect x=".5" y="7.500" width="10" height="7" fill="#c8c8c8" stroke="#f0f0f0"/><path d="M0 7.500H11M11 0V15M0 15H11" stroke="#707070" stroke-width="1"/><polygon points="2.500,5.200 5.500,2 8.500,5.200" fill="#000"/><polygon points="2.500,9.800 5.500,13 8.500,9.800" fill="#000"/></svg><div class="cb" style="left:176px;top:638px"></div><div class="t r dis" style="left:112px;width:150.5px;top:638px;letter-spacing:0.04px">Dim fall off</div><div class="fld dis" style="left:266px;top:637px;width:38px;height:15px;line-height:13px">0,0</div><svg class="sp" style="left:309px;top:637px" viewBox="0 0 11 15"><rect x=".5" y=".5" width="10" height="6.500" fill="#c8c8c8" stroke="#f0f0f0"/><rect x=".5" y="7.500" width="10" height="7" fill="#c8c8c8" stroke="#f0f0f0"/><path d="M0 7.500H11M11 0V15M0 15H11" stroke="#707070" stroke-width="1"/><polygon points="2.500,5.200 5.500,2 8.500,5.200" fill="#000"/><polygon points="2.500,9.800 5.500,13 8.500,9.800" fill="#000"/></svg><div class="t r" style="left:-38px;width:150.5px;top:657px;letter-spacing:-0.01px">Affect channels</div><div class="dd" style="left:116px;top:655px;width:77px;letter-spacing:-0.12px">Color only</div><svg class="a" style="left:181px;top:663px" width="9" height="6"><polygon points="0.500,1 8.500,1 4.500,5" fill="#000"/></svg><div class="grp" style="left:26px;top:688px;width:318px;height:172px"></div><div class="gl" style="left:31px;top:682px;letter-spacing:0.07px">Refraction</div><div class="t r" style="left:-38px;width:150.8px;top:706px;letter-spacing:0.26px">Refract</div><div class="sw" style="left:116px;top:705px;width:53px;height:16px;background:#000"></div><div class="mb" style="left:173px;top:705px;height:16px;line-height:14px"></div><div class="t r" style="left:112px;width:150.4px;top:706px;letter-spacing:-0.09px">IOR</div><div class="fld" style="left:266px;top:706px;width:38px;height:15px;line-height:13px">1,6</div><svg class="sp" style="left:309px;top:706px" viewBox="0 0 11 15"><rect x=".5" y=".5" width="10" height="6.500" fill="#c8c8c8" stroke="#f0f0f0"/><rect x=".5" y="7.500" width="10" height="7" fill="#c8c8c8" stroke="#f0f0f0"/><path d="M0 7.500H11M11 0V15M0 15H11" stroke="#707070" stroke-width="1"/><polygon points="2.500,5.200 5.500,2 8.500,5.200" fill="#000"/><polygon points="2.500,9.800 5.500,13 8.500,9.800" fill="#000"/></svg><div class="mb" style="left:323px;top:705px;height:15px;line-height:13px"></div><div class="t r" style="left:-38px;width:150.1px;top:726px;letter-spacing:-0.45px">Glossiness</div><div class="fld" style="left:116px;top:725px;width:38px;height:15px;line-height:13px">1,0</div><svg class="sp" style="left:159px;top:725px" viewBox="0 0 11 15"><rect x=".5" y=".5" width="10" height="6.500" fill="#c8c8c8" stroke="#f0f0f0"/><rect x=".5" y="7.500" width="10" height="7" fill="#c8c8c8" stroke="#f0f0f0"/><path d="M0 7.500H11M11 0V15M0 15H11" stroke="#707070" stroke-width="1"/><polygon points="2.500,5.200 5.500,2 8.500,5.200" fill="#000"/><polygon points="2.500,9.800 5.500,13 8.500,9.800" fill="#000"/></svg><div class="mb" style="left:173px;top:725px;height:15px;line-height:13px"></div><div class="t r" style="left:112px;width:150.5px;top:726px;letter-spacing:0.04px">Max depth</div><div class="fld" style="left:266px;top:725px;width:38px;height:15px;line-height:13px">5</div><svg class="sp" style="left:309px;top:725px" viewBox="0 0 11 15"><rect x=".5" y=".5" width="10" height="6.500" fill="#c8c8c8" stroke="#f0f0f0"/><rect x=".5" y="7.500" width="10" height="7" fill="#c8c8c8" stroke="#f0f0f0"/><path d="M0 7.500H11M11 0V15M0 15H11" stroke="#707070" stroke-width="1"/><polygon points="2.500,5.200 5.500,2 8.500,5.200" fill="#000"/><polygon points="2.500,9.800 5.500,13 8.500,9.800" fill="#000"/></svg><div class="t r" style="left:-38px;width:150.3px;top:745px;letter-spacing:-0.21px">Subdivs</div><div class="fld" style="left:116px;top:744px;width:38px;height:15px;line-height:13px">8</div><svg class="sp" style="left:159px;top:744px" viewBox="0 0 11 15"><rect x=".5" y=".5" width="10" height="6.500" fill="#c8c8c8" stroke="#f0f0f0"/><rect x=".5" y="7.500" width="10" height="7" fill="#c8c8c8" stroke="#f0f0f0"/><path d="M0 7.500H11M11 0V15M0 15H11" stroke="#707070" stroke-width="1"/><polygon points="2.500,5.200 5.500,2 8.500,5.200" fill="#000"/><polygon points="2.500,9.800 5.500,13 8.500,9.800" fill="#000"/></svg><div class="t r dis" style="left:112px;width:150.5px;top:745px;letter-spacing:-0.05px">Exit color</div><div class="sw" style="left:266px;top:744px;width:53px;height:16px;background:#000"></div><div class="cb" style="left:323px;top:745px"></div><div class="t r" style="left:1px;width:150.4px;top:766px;letter-spacing:-0.09px">Use interpolation</div><div class="cb" style="left:157px;top:765px"></div><div class="t r" style="left:112px;width:150.3px;top:765px;letter-spacing:-0.17px">Fog color</div><div class="sw" style="left:266px;top:764px;width:53px;height:16px;background:#fff"></div><div class="mb" style="left:323px;top:764px;height:15px;line-height:13px"></div><div class="t r" style="left:1px;width:150.6px;top:785px;letter-spacing:0.06px">Affect shadows</div><div class="cb" style="left:157px;top:784px"></div><div class="t r" style="left:112px;width:150.3px;top:784px;letter-spacing:-0.16px">Fog multiplier</div><div class="fld" style="left:266px;top:784px;width:38px;height:15px;line-height:13px">1,0</div><svg class="sp" style="left:309px;top:784px" viewBox="0 0 11 15"><rect x=".5" y=".5" width="10" height="6.500" fill="#c8c8c8" stroke="#f0f0f0"/><rect x=".5" y="7.500" width="10" height="7" fill="#c8c8c8" stroke="#f0f0f0"/><path d="M0 7.500H11M11 0V15M0 15H11" stroke="#707070" stroke-width="1"/><polygon points="2.500,5.200 5.500,2 8.500,5.200" fill="#000"/><polygon points="2.500,9.800 5.500,13 8.500,9.800" fill="#000"/></svg><div class="t r" style="left:-38px;width:150.5px;top:805px;letter-spacing:-0.01px">Affect channels</div><div class="dd" style="left:116px;top:803px;width:77px;letter-spacing:-0.12px">Color only</div><svg class="a" style="left:181px;top:811px" width="9" height="6"><polygon points="0.500,1 8.500,1 4.500,5" fill="#000"/></svg><div class="t r" style="left:112px;width:150.3px;top:804px;letter-spacing:-0.24px">Fog bias</div><div class="fld" style="left:266px;top:804px;width:38px;height:15px;line-height:13px">0,0</div><svg class="sp" style="left:309px;top:804px" viewBox="0 0 11 15"><rect x=".5" y=".5" width="10" height="6.500" fill="#c8c8c8" stroke="#f0f0f0"/><rect x=".5" y="7.500" width="10" height="7" fill="#c8c8c8" stroke="#f0f0f0"/><path d="M0 7.500H11M11 0V15M0 15H11" stroke="#707070" stroke-width="1"/><polygon points="2.500,5.200 5.500,2 8.500,5.200" fill="#000"/><polygon points="2.500,9.800 5.500,13 8.500,9.800" fill="#000"/></svg><div class="t r" style="left:22px;width:150.3px;top:828px;letter-spacing:-0.17px">Dispersion</div><div class="cb" style="left:182px;top:829px"></div><div class="t r dis" style="left:107px;width:150.6px;top:828px;letter-spacing:0.15px">Abbe</div><div class="fld dis" style="left:266px;top:828px;width:38px;height:15px;line-height:13px">50,0</div><svg class="sp" style="left:309px;top:828px" viewBox="0 0 11 15"><rect x=".5" y=".5" width="10" height="6.500" fill="#c8c8c8" stroke="#f0f0f0"/><rect x=".5" y="7.500" width="10" height="7" fill="#c8c8c8" stroke="#f0f0f0"/><path d="M0 7.500H11M11 0V15M0 15H11" stroke="#707070" stroke-width="1"/><polygon points="2.500,5.200 5.500,2 8.500,5.200" fill="#000"/><polygon points="2.500,9.800 5.500,13 8.500,9.800" fill="#000"/></svg></body></html>
